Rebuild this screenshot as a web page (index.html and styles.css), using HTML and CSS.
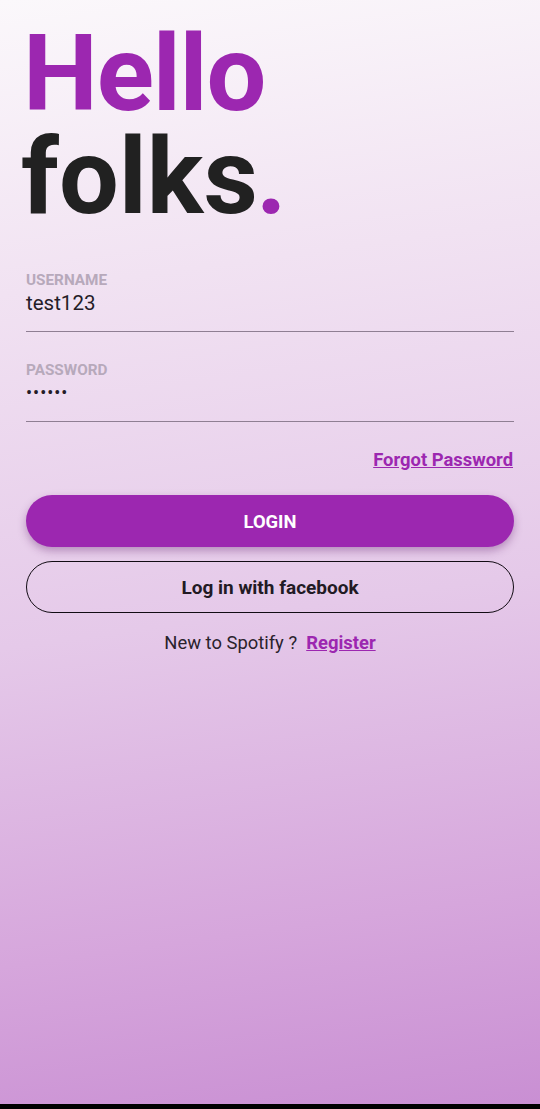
FILE: index.html
```html
<!DOCTYPE html>
<html lang="en">
<head>
<meta charset="utf-8">
<meta name="viewport" content="width=540">
<title>Login</title>
<link rel="stylesheet" href="styles.css">
</head>
<body>
<div class="screen">
  <main class="content">
    <h1 class="title">
      <span class="hello">Hello</span>
      <span class="folks">folks<span class="dot">.</span></span>
    </h1>
    <form class="form">
      <label class="field">
        <span class="label">USERNAME</span>
        <span class="value">test123</span>
      </label>
      <label class="field">
        <span class="label">PASSWORD</span>
        <span class="value dots">••••••</span>
      </label>
      <div class="forgot-row"><a class="link forgot" href="#">Forgot Password</a></div>
      <button type="button" class="btn btn-login">LOGIN</button>
      <button type="button" class="btn btn-fb">Log in with facebook</button>
      <p class="register">New to Spotify ?&nbsp; <a class="link" href="#">Register</a></p>
    </form>
  </main>
  <div class="navbar"></div>
</div>
</body>
</html>
```
FILE: styles.css
```css
* { box-sizing: border-box; }
html, body { margin: 0; padding: 0; }
body {
  font-family: Roboto, "Liberation Sans", sans-serif;
  background: #000;
}
.screen {
  width: 540px;
  height: 1109px;
  display: flex;
  flex-direction: column;
}
.content {
  flex: 1;
  background: linear-gradient(172deg, #fbf8fb 0%, #f1e2f2 25%, #e5c9e9 55%, #d6a6dc 82%, #c98fd3 100%);
  padding: 0 26px;
}
.title {
  margin: 0;
  padding-top: 23px;
  font-weight: 700;
  font-size: 106px;
  line-height: 103px;
}
.hello, .folks { display: block; }
.hello { color: #9c27b0; margin-left: -3px; letter-spacing: -1.2px; }
.folks { color: #212121; margin-left: -5px; letter-spacing: 0; }
.dot { color: #9c27b0; margin-left: -2px; }
.form {
  margin-top: 43px;
  display: flex;
  flex-direction: column;
}
.field {
  display: flex;
  flex-direction: column;
  border-bottom: 1.5px solid #8f7f93;
  height: 60px;
  margin-bottom: 30px;
}
.label {
  font-size: 15.3px;
  font-weight: 700;
  color: #b7a9bb;
  line-height: 17px;
}
.value {
  font-size: 20.5px;
  color: #241c27;
  line-height: 28px;
  margin-top: 0;
}
.dots {
  font-size: 18px;
  letter-spacing: 1px;
  line-height: 24px;
  margin-top: 2px;
}
.forgot-row {
  display: flex;
  justify-content: flex-end;
  margin-top: -3px;
}
.link {
  color: #9c27b0;
  font-weight: 700;
  text-decoration: underline;
}
.forgot {
  font-size: 18.4px;
  line-height: 22px;
  margin-right: 1px;
}
.btn {
  width: 100%;
  height: 52px;
  border-radius: 26px;
  font-family: Roboto, "Liberation Sans", sans-serif;
  font-weight: 700;
  font-size: 18.4px;
  cursor: pointer;
}
.btn-login {
  margin-top: 24px;
  background: #9c27b0;
  color: #fff;
  border: none;
  box-shadow: 0 4px 8px rgba(90, 20, 100, 0.35);
}
.btn-fb {
  margin-top: 14px;
  background: transparent;
  color: #221a24;
  border: 1.5px solid #120c14;
  font-size: 19px;
}
.register {
  margin: 19px 0 0;
  text-align: center;
  font-size: 18.4px;
  color: #2a222c;
}
.navbar {
  height: 5px;
  background: #000;
}
```
